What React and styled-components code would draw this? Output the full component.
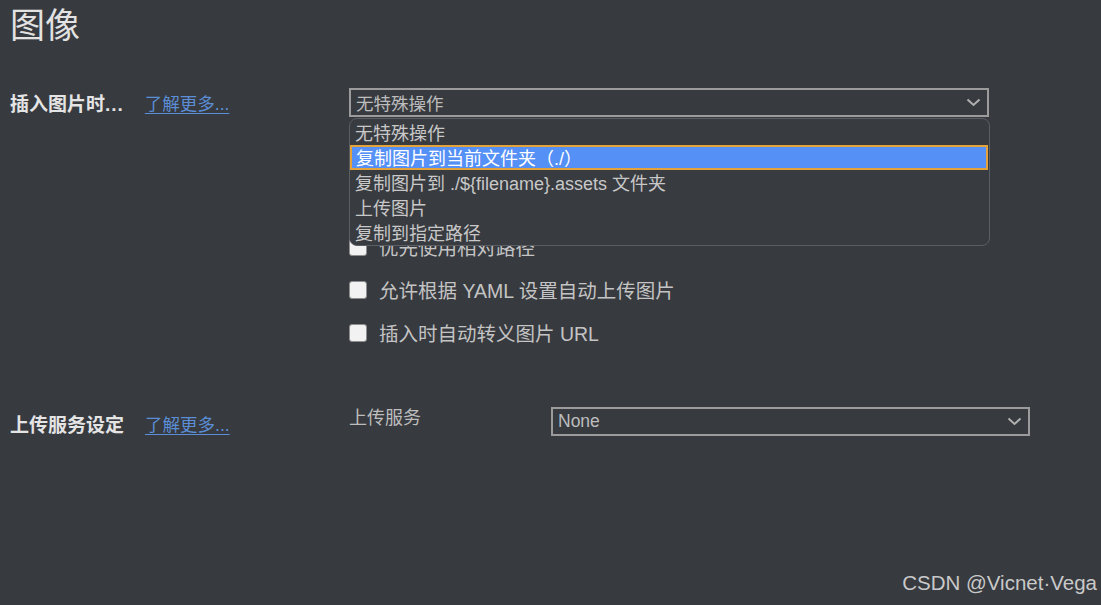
import styled, { createGlobalStyle } from "styled-components";

const GlobalStyle = createGlobalStyle`
   html, body {
      margin: 0;
      padding: 0;
      background: #373a3f;
   }
   body {
      font-family: "Liberation Sans", "Noto Sans CJK SC", sans-serif;
      color: #c4c4c4;
   }
`;

const Page = styled.div`
   position: relative;
   min-height: 100vh;
   padding: 5px 0 0 10px;
   box-sizing: border-box;
   overflow: hidden;
`;

const Title = styled.h1`
   margin: 0;
   font-size: 35px;
   font-weight: 400;
   line-height: 42px;
   color: #e2e2e2;
`;

const Section = styled.section`
   display: grid;
   grid-template-columns: 339px 640px;
   align-items: start;
   margin-top: ${(p) => p.$top}px;
`;

const Label = styled.div`
   display: flex;
   align-items: center;
   height: ${(p) => p.$height}px;
   gap: 21px;
   font-size: 19px;
   font-weight: 700;
   color: #e4e4e4;
`;

const Dots = styled.span`
   letter-spacing: 1px;
`;

const More = styled.a`
   font-size: 17.5px;
   font-weight: 400;
   color: #5b8ed6;
   text-decoration: underline;
   text-underline-offset: 3px;
   cursor: pointer;
`;

const Field = styled.div`
   position: relative;
`;

const SelectBox = styled.div`
   display: flex;
   align-items: center;
   justify-content: space-between;
   width: ${(p) => p.$width}px;
   height: 29px;
   box-sizing: border-box;
   border: 2px solid #9b9b9b;
   padding: 0 6px 0 5px;
   font-size: 17.5px;
   color: #bdbdbd;
`;

const Chevron = () => (
   <svg width="15" height="9" viewBox="0 0 15 9">
      <path
         d="M1.5 1.5 L7.5 7 L13.5 1.5"
         fill="none"
         stroke="#b0b0b0"
         strokeWidth="2"
      />
   </svg>
);

const Popup = styled.ul`
   position: absolute;
   top: 30px;
   left: 0;
   z-index: 2;
   width: 641px;
   margin: 0;
   padding: 1px 0 0;
   box-sizing: border-box;
   list-style: none;
   background: #383b40;
   border: 1.5px solid #5b5e63;
   border-radius: 8px;
`;

const Option = styled.li`
   height: 25px;
   line-height: 24px;
   box-sizing: border-box;
   padding-left: 5px;
   font-size: 18px;
   white-space: nowrap;
   color: #c8c8c8;
   border: 2px solid transparent;
   border-left: 0;
   border-right: 0;

   &[data-active="true"] {
      color: #ffffff;
      background: #5590f6;
      border: 2px solid #e3a23a;
      padding-left: 4px;
      margin-right: 1px;
   }
`;

const Checks = styled.div`
   display: flex;
   flex-direction: column;
   margin-top: 22px;
`;

const CheckRow = styled.label`
   display: flex;
   align-items: center;
   gap: 12px;
   height: 43px;
   font-size: 19.5px;
   color: #c4c4c4;
`;

const Box = styled.span`
   width: 18px;
   height: 18px;
   box-sizing: border-box;
   border-radius: 3px;
   border: 1px solid #8e8e8e;
   background: #f2f2f2;
   flex-shrink: 0;
`;

const ServiceRow = styled.div`
   display: grid;
   grid-template-columns: 202px auto;
   align-items: start;
`;

const ServiceLabel = styled.div`
   font-size: 18px;
   line-height: 22px;
   color: #bdbdbd;
`;

const Watermark = styled.div`
   position: absolute;
   right: 4px;
   bottom: 10px;
   font-size: 20.5px;
   color: #c9c9c9;
`;

const options = [
   "无特殊操作",
   "复制图片到当前文件夹（./）",
   "复制图片到 ./${filename}.assets 文件夹",
   "上传图片",
   "复制到指定路径",
];

const checks = [
   "对本地位置的图片应用上述规则",
   "对网络位置的图片应用上述规则",
   "优先使用相对路径",
   "允许根据 YAML 设置自动上传图片",
   "插入时自动转义图片 URL",
];

export default function App() {
   return (
      <Page>
         <GlobalStyle />
         <Title>图像</Title>

         <Section $top={41}>
            <Label $height={29}>
               <span>
                  插入图片时<Dots>...</Dots>
               </span>
               <More>了解更多...</More>
            </Label>
            <Field>
               <SelectBox $width={640}>
                  <span>无特殊操作</span>
                  <Chevron />
               </SelectBox>
               <Popup>
                  {options.map((o, i) => (
                     <Option key={o} data-active={i === 1}>
                        {o}
                     </Option>
                  ))}
               </Popup>
               <Checks>
                  {checks.map((c) => (
                     <CheckRow key={c}>
                        <Box />
                        {c}
                     </CheckRow>
                  ))}
               </Checks>
            </Field>
         </Section>

         <Section $top={53}>
            <Label $height={32}>
               上传服务设定
               <More>了解更多...</More>
            </Label>
            <ServiceRow>
               <ServiceLabel>上传服务</ServiceLabel>
               <SelectBox $width={479}>
                  <span>None</span>
                  <Chevron />
               </SelectBox>
            </ServiceRow>
         </Section>

         <Watermark>CSDN @Vicnet·Vega</Watermark>
      </Page>
   );
}
